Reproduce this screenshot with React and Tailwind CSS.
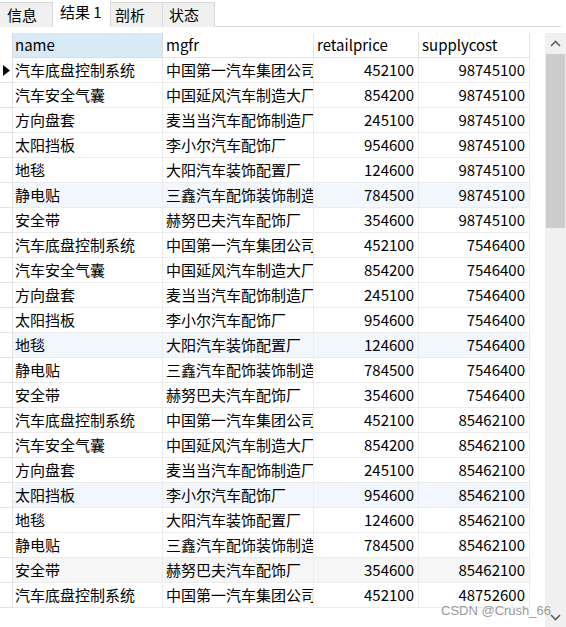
import React from "react";

const names = [
  ["汽车底盘控制系统", "中国第一汽车集团公司", "452100"],
  ["汽车安全气囊", "中国延风汽车制造大厂", "854200"],
  ["方向盘套", "麦当当汽车配饰制造厂", "245100"],
  ["太阳挡板", "李小尔汽车配饰厂", "954600"],
  ["地毯", "大阳汽车装饰配置厂", "124600"],
  ["静电贴", "三鑫汽车配饰装饰制造厂", "784500"],
  ["安全带", "赫努巴夫汽车配饰厂", "354600"],
];

const rows = [];
["98745100", "7546400", "85462100"].forEach((c) => {
  names.forEach((n) => rows.push([...n, c]));
});
rows.push([...names[0], "48752600"]);

function rowBg(i) {
  if (i === 5 || i === 11 || i === 17) return "bg-[#f2f7fd]";
  if (i === 20) return "bg-[#f6f6f6]";
  return "bg-white";
}

const font = { fontFamily: '"Microsoft YaHei", "Noto Sans CJK SC", "Noto Sans", sans-serif' };

function Chevron({ up }) {
  return (
    <svg width="11" height="7" viewBox="0 0 11 7">
      <path
        d={up ? "M1 6 L5.5 1.5 L10 6" : "M1 1 L5.5 5.5 L10 1"}
        fill="none"
        stroke="#606060"
        strokeWidth="1.6"
      />
    </svg>
  );
}

export default function App() {
  return (
    <div
      className="relative w-[566px] h-[627px] bg-white overflow-hidden text-black"
      style={font}
    >
      {/* tabs */}
      <div className="flex items-end h-[27px] border-b border-[#d9d9d9] mr-[5px]">
        <div className="w-[53px] h-[25px] bg-[#f0f0f0] border-t border-r border-[#d9d9d9] flex items-center pl-[7px] pb-[1px] text-[15px] leading-none -mb-px">
          信息
        </div>
        <div className="w-[58px] h-[28px] bg-white border-t border-r border-[#d9d9d9] flex items-center pl-[7px] pb-[4px] text-[15px] leading-none -mb-px relative z-10">
          结果 1
        </div>
        <div className="w-[52px] h-[25px] bg-[#f0f0f0] border-t border-r border-[#d9d9d9] flex items-center pl-[4px] pb-[1px] text-[15px] leading-none -mb-px">
          剖析
        </div>
        <div className="w-[52px] h-[25px] bg-[#f0f0f0] border-t border-r border-[#d9d9d9] flex items-center pl-[6px] pb-[1px] text-[15px] leading-none -mb-px">
          状态
        </div>
      </div>

      <div className="flex mt-[6px]">
        {/* table */}
        <div className="flex-1 flex flex-col">
          <div className="flex h-[25px] text-[15px]">
            <div className="w-[13px] border-r border-[#dcdcdc]"></div>
            <div className="w-[150px] bg-[#d9eaf7] border-r border-b border-[#dcdcdc] flex items-center pl-[2px]">
              name
            </div>
            <div className="w-[151px] border-r border-b border-[#e3e3e3] flex items-center pl-[3px]">
              mgfr
            </div>
            <div className="w-[105px] border-r border-b border-[#e3e3e3] flex items-center pl-[3px]">
              retailprice
            </div>
            <div className="w-[111px] border-r border-b border-[#e3e3e3] flex items-center pl-[3px]">
              supplycost
            </div>
          </div>
          {rows.map((r, i) => (
            <div key={i} className="flex h-[25px] text-[15px]">
              <div className="w-[13px] border-r border-b border-[#e3e3e3] bg-white flex items-center justify-center">
                {i === 0 && (
                  <svg width="7" height="11" viewBox="0 0 7 11">
                    <path d="M0 0 L7 5.5 L0 11 Z" fill="#000" />
                  </svg>
                )}
              </div>
              <div className={`w-[150px] ${rowBg(i)} border-r border-b border-[#ececec] flex items-center pl-[2px] whitespace-nowrap overflow-hidden`}>
                {r[0]}
              </div>
              <div className={`w-[151px] ${rowBg(i)} border-r border-b border-[#ececec] flex items-center pl-[3px] whitespace-nowrap overflow-hidden`}>
                {r[1]}
              </div>
              <div className={`w-[105px] ${rowBg(i)} border-r border-b border-[#ececec] flex items-center justify-end pr-[4px]`}>
                {r[2]}
              </div>
              <div className={`w-[111px] ${rowBg(i)} border-r border-b border-[#ececec] flex items-center justify-end pr-[4px]`}>
                {r[3]}
              </div>
            </div>
          ))}
        </div>

        {/* scrollbar */}
        <div className="w-[21px] h-[594px] bg-[#f0f0f0] flex flex-col">
          <div className="h-[21px] flex items-center justify-center">
            <Chevron up />
          </div>
          <div className="h-[174px] w-[19px] bg-[#cdcdcd] ml-px"></div>
          <div className="flex-1"></div>
          <div className="h-[19px] flex items-center justify-center">
            <Chevron />
          </div>
        </div>
      </div>

      <div className="absolute left-[441px] top-[604px] text-[13px] text-[#9a9a9a] leading-none" style={{ fontFamily: '"Liberation Sans", Arial, sans-serif' }}>
        CSDN @Crush_66
      </div>
    </div>
  );
}
